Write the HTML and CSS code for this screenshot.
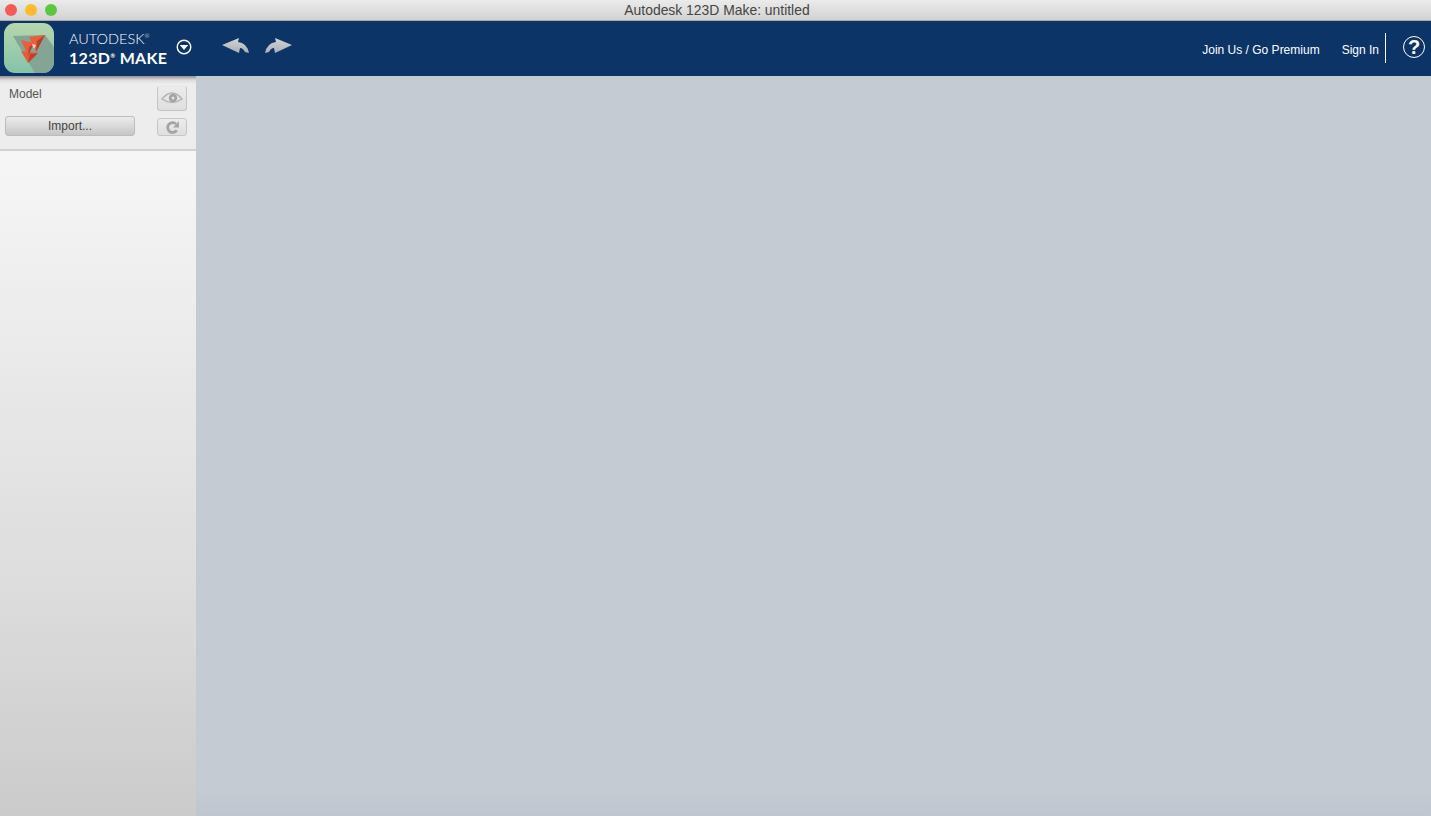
FILE: index.html
```html
<!DOCTYPE html>
<html lang="en">
<head>
    <meta charset="UTF-8">
    <title>Autodesk 123D Make: untitled</title>
    <link rel="stylesheet" href="styles.css">
</head>
<body>
    <div class="titlebar">
        <div class="lights">
            <span class="light red"></span>
            <span class="light yellow"></span>
            <span class="light green"></span>
        </div>
        <div class="window-title">Autodesk 123D Make: untitled</div>
    </div>

    <div class="header">
        <svg class="logo" width="50" height="50" viewBox="0 0 50 50">
            <defs>
                <linearGradient id="logoBg" x1="0" y1="0" x2="0" y2="1">
                    <stop offset="0" stop-color="#b6d7ac"/>
                    <stop offset="1" stop-color="#84c3aa"/>
                </linearGradient>
                <linearGradient id="arrowFill" x1="0" y1="0" x2="0" y2="1">
                    <stop offset="0" stop-color="#d2d5d8"/>
                    <stop offset="1" stop-color="#a9afb6"/>
                </linearGradient>
                <clipPath id="logoClip">
                    <rect width="50" height="50" rx="11"/>
                </clipPath>
            </defs>
            <rect width="50" height="50" rx="11" fill="url(#logoBg)"/>
            <path d="M9 13 L41 12 L50 24 L50 50 L31 50 Z" fill="#84a596" clip-path="url(#logoClip)"/>
            <!-- bottom pyramid -->
            <path d="M17 28 L34 30 L24 40 Z" fill="#e85a3c"/>
            <path d="M26 31 L34 30 L24 40 Z" fill="#b8432f"/>
            <!-- left pyramid -->
            <path d="M17 17 L30 20 L24 33 Z" fill="#ea5d3f"/>
            <path d="M25 24 L30 20 L24 33 Z" fill="#b8432f"/>
            <!-- right pyramid -->
            <path d="M25 14 L41 12 L32 29 Z" fill="#ea5d3f"/>
            <path d="M33 18 L41 12 L32 29 Z" fill="#b03f2d"/>
            <path d="M28 21 L32 22 L30 26 Z" fill="#f3dcc0"/>
        </svg>
        <div class="brand">
            <div class="brand-top">AUTODESK<sup>®</sup></div>
            <div class="brand-bottom">123D<sup>®</sup> MAKE</div>
        </div>
        <svg class="menu-arrow" width="16" height="16" viewBox="0 0 16 16">
            <circle cx="8" cy="8" r="6.8" fill="none" stroke="#fff" stroke-width="1.4"/>
            <path d="M3.8 6 L12.2 6 L8 11 Z" fill="#fff"/>
        </svg>
        <svg class="undo" width="30" height="18" viewBox="0 0 30 18">
            <path d="M1 8 L18 1 L17 5 Q26 6 28 16 L24 15 Q22 11 19 11 L18 16 Z" fill="url(#arrowFill)"/>
        </svg>
        <svg class="redo" width="30" height="18" viewBox="0 0 30 18">
            <path d="M29 8 L12 1 L13 5 Q4 6 2 16 L6 15 Q8 11 11 11 L12 16 Z" fill="url(#arrowFill)"/>
        </svg>
        <div class="header-links">
            <a class="link">Join Us / Go Premium</a>
            <a class="link sign-in">Sign In</a>
            <span class="help">?</span>
        </div>
    </div>

    <div class="main">
        <div class="sidebar">
            <div class="model-panel">
                <div class="model-left">
                    <div class="model-label">Model</div>
                    <button class="import-btn">Import...</button>
                </div>
                <div class="model-tools">
                    <button class="tool-btn eye-btn">
                        <svg width="22" height="15" viewBox="0 0 22 15">
                            <path d="M1 8 Q11 -4 21 8 Q11 15 1 8 Z" fill="none" stroke="#b4b4b4" stroke-width="1.5"/>
                            <circle cx="12" cy="7" r="4.2" fill="#a4a4a4"/>
                            <circle cx="12" cy="7" r="1.5" fill="#e4e4e4"/>
                        </svg>
                    </button>
                    <button class="tool-btn refresh-btn">
                        <svg width="15" height="15" viewBox="0 0 14 14">
                            <path d="M11 9.5 A4.6 4.6 0 1 1 10.2 3.6" fill="none" stroke="#a4a4a4" stroke-width="2.6"/>
                            <path d="M13 1 L13 7 L7.5 7 Z" fill="#a4a4a4"/>
                        </svg>
                    </button>
                </div>
            </div>
        </div>
        <div class="canvas"></div>
    </div>
</body>
</html>
```

FILE: styles.css
```css
html, body {
    height: 100%;
}
body {
    margin: 0;
    display: flex;
    flex-direction: column;
    overflow: hidden;
    font-family: "Liberation Sans", Arial, sans-serif;
    background-color: #c4cbd3;
}
.titlebar {
    height: 20px;
    flex: none;
    display: flex;
    align-items: center;
    justify-content: center;
    position: relative;
    background: linear-gradient(#ebebeb, #d2d2d2);
    border-bottom: 1px solid #a9a9a9;
}
.lights {
    position: absolute;
    left: 5px;
    top: 4px;
    display: flex;
    gap: 8px;
}
.light {
    width: 12px;
    height: 12px;
    border-radius: 50%;
}
.red {
    background-color: #f55a55;
}
.yellow {
    background-color: #fbbc2e;
}
.green {
    background-color: #5ac83f;
}
.window-title {
    font-size: 13.9px;
    color: #454545;
    margin-left: 3px;
}
.header {
    height: 55px;
    flex: none;
    display: flex;
    align-items: flex-start;
    background-color: #0c3467;
    color: white;
}
.logo {
    margin: 2px 0 0 4px;
    flex: none;
}
.brand {
    margin: 9px 0 0 15px;
    width: 105px;
    font-family: Lato, sans-serif;
    flex: none;
}
.brand sup {
    font-size: 6px;
    line-height: 0;
    vertical-align: 6px;
}
.brand-top {
    font-size: 14.5px;
    font-weight: 300;
    line-height: 18px;
}
.brand-bottom {
    font-size: 16px;
    font-weight: 700;
    line-height: 19px;
    letter-spacing: 0.3px;
}
.menu-arrow {
    margin: 18px 0 0 2px;
    flex: none;
}
.undo {
    margin: 16px 0 0 29px;
    flex: none;
}
.redo {
    margin: 16px 0 0 12px;
    flex: none;
}
.header-links {
    margin-left: auto;
    display: flex;
    align-items: flex-start;
    font-size: 12px;
}
.link {
    margin-top: 22px;
    line-height: 15px;
}
.sign-in {
    margin-left: 22px;
    padding: 0 6px 0 0;
    margin-top: 12px;
    height: 30px;
    line-height: 35px;
    border-right: 1px solid white;
}
.help {
    width: 20px;
    height: 20px;
    margin: 15px 6px 0 17px;
    border: 1px solid white;
    border-radius: 50%;
    text-align: center;
    font-size: 20px;
    font-weight: bold;
    line-height: 21px;
}
.main {
    flex: 1;
    display: flex;
    min-height: 0;
}
.sidebar {
    width: 196px;
    flex: none;
    background: linear-gradient(#f6f6f6 76px, #dcdcdc 70%, #cbcbcb);
}
.model-panel {
    height: 75px;
    box-sizing: border-box;
    display: flex;
    justify-content: space-between;
    background-color: #ececec;
    background-image: linear-gradient(#8f8f8f, #dcdcdc 4px, #ededed 8px);
    border-bottom: 2px solid #d2d2d2;
    padding: 10px 9px 0 5px;
}
.model-left {
    width: 130px;
}
.model-label {
    margin-left: 4px;
    font-size: 12px;
    color: #555;
    line-height: 16px;
}
.import-btn {
    display: block;
    width: 130px;
    height: 20px;
    margin-top: 14px;
    padding: 0;
    border: 1px solid #bcbcbc;
    border-radius: 3px;
    background: linear-gradient(#ececec, #c6c6c6);
    font-family: inherit;
    font-size: 12px;
    color: #444;
}
.model-tools {
    display: flex;
    flex-direction: column;
    gap: 7px;
}
.tool-btn {
    width: 30px;
    padding: 0;
    display: flex;
    align-items: center;
    justify-content: center;
    border: 1px solid #c6c6c6;
    border-radius: 3px;
    background: linear-gradient(#ececec, #dedede);
}
.eye-btn {
    height: 25px;
    border-top-color: #e6e6e6;
}
.refresh-btn {
    height: 18px;
}
.canvas {
    flex: 1;
    background: linear-gradient(#c4cbd3, #c4cbd3 96%, #bfc6cf);
}
```
